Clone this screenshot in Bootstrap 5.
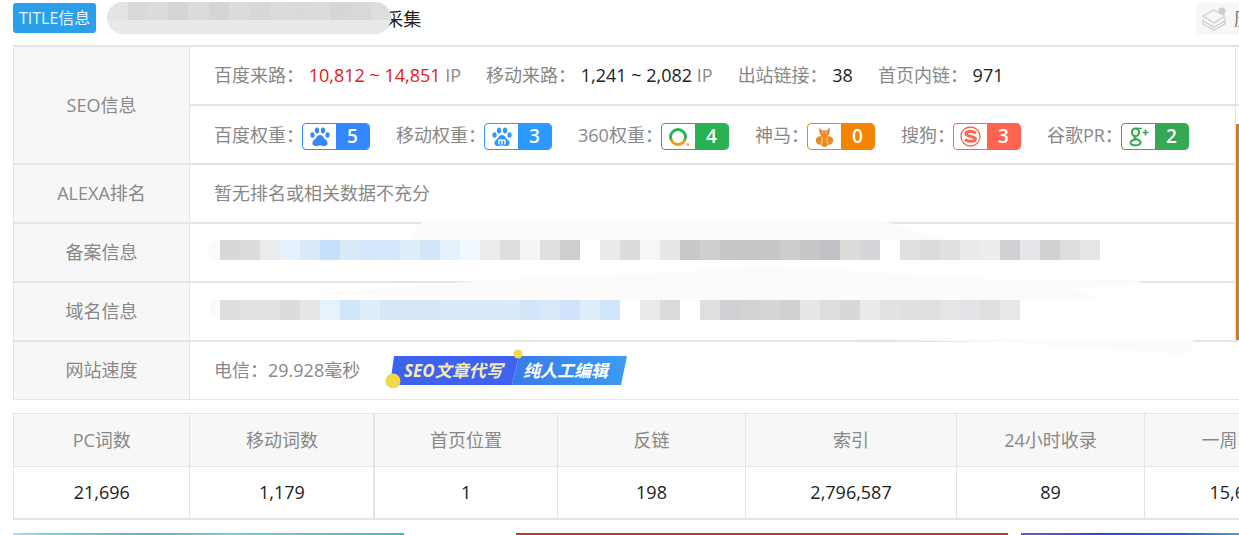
<!DOCTYPE html>
<html lang="zh-CN">
<head>
<meta charset="utf-8">
<meta name="viewport" content="width=device-width, initial-scale=1">
<title>SEO信息</title>
<link rel="stylesheet" href="https://cdn.jsdelivr.net/npm/bootstrap@5.3.0/dist/css/bootstrap.min.css">
<style>
body{font-family:"Open Sans","Noto Sans CJK SC",sans-serif;font-size:18px;line-height:27px;color:#888;height:100vh;overflow:hidden;background:#fff}
.page{padding-left:13px}
.topbar{height:45px;padding-top:2px}
.title-tag{background:#2b9fe9;font-size:16px;line-height:30px;padding:0 6px;border-radius:3px;color:#e4f4ff;margin-top:1px}
.smear{width:284px;height:32px;margin:0 -6px 0 11px;border-radius:16px;background:#e8e8e8;overflow:hidden}
.smear i{height:18px;flex:1}
.site-title{color:#222;line-height:34px}
.history{background:#f7f7f7;color:#777;width:43px;height:32px;padding:0 0 0 6px;margin-top:1px;overflow:hidden;white-space:nowrap}
.info{width:100%;border-collapse:collapse}
.info th,.info td{height:59px;border-top:2px solid #e4e4e4;padding:0 0 0 24px}
.info th{width:176px;padding:0;text-align:center;font-weight:400;background:#f7f7f7;border-left:1px solid #e4e4e4;border-right:1px solid #e4e4e4}
.info tr:last-child>*{height:58px;border-bottom:1px solid #e4e4e4}
.num{color:#222}
.hot{color:#e02020}
.traffic{column-gap:25px}
.weights{column-gap:26px;padding-top:2px}
.rank{width:68px;height:27px;border:1px solid var(--c);border-radius:4px;overflow:hidden;background:#fff;text-decoration:none;margin:1px 0 0 -2px}
.rank svg{width:33px;height:25px;flex:none}
.rank b{flex:1;background:var(--c);color:#fff;font-weight:600;font-size:19px;line-height:25px;text-align:center}
.edge{right:0;top:0;width:4px;height:295px;border-left:1px solid #e4e4e4}
.edge span{display:block;margin-top:79px;height:216px;background:#da7d0b}
.veil{left:0;top:-9px;width:1010px;height:145px;pointer-events:none}
.promo{margin-bottom:5px}
.promo svg{display:block}
.promo text{font-size:17px;font-weight:700;font-style:italic}
.counts-wrap{margin-top:13px;overflow:hidden}
.counts{width:107.5%;table-layout:fixed;border-collapse:collapse;text-align:center}
.counts th,.counts td{height:53px;border:1px solid #e4e4e4;padding:1px 0 0}
.counts th{background:#f7f7f7;font-weight:400}
.counts td{color:#222;border-bottom-width:2px}
.counts tr>:nth-child(3){border-left-width:2px}
.ads{margin-top:13px;height:2px}
.ads a{height:2px}
.ad-a{width:391px;background:linear-gradient(90deg,#b8dcf2,#7cd3d8 8%,#45bcc8 35%,#77d0d2 55%,#35bdc7)}
.ad-b{width:492px;margin-left:112px;background:#cc2d37}
.ad-c{flex:1;margin-left:13px;background:linear-gradient(90deg,#7650e4,#3446e2 35%,#3159ea 75%,#35a4ef)}
</style>
</head>
<body>
<main class="page">
  <header class="topbar d-flex align-items-start">
    <span class="title-tag">TITLE信息</span>
    <span class="smear d-flex position-relative z-1" aria-hidden="true"></span>
    <span class="site-title">采集</span>
    <button type="button" class="history border-0 ms-auto d-flex align-items-center gap-2">
      <svg class="flex-shrink-0" width="24" height="24" viewBox="0 0 24 24" fill="none" stroke="#ccc" stroke-width="1.3" stroke-linejoin="round"><path d="M1 9 12 3l11 6-11 7zM1 12v2l11 6 11-6v-3M1 15v2l11 6 11-6v-3"/><circle cx="20" cy="4" r="3.5" fill="#ccc" stroke="none"/></svg>
      <span>历史</span>
    </button>
  </header>

  <section class="position-relative">
    <table class="info">
      <tr>
        <th scope="row" rowspan="2">SEO信息</th>
        <td><div class="traffic d-flex text-nowrap">
          <span>百度来路： <span class="hot">10,812 ~ 14,851</span> IP</span>
          <span>移动来路： <span class="num">1,241 ~ 2,082</span> IP</span>
          <span>出站链接： <span class="num">38</span></span>
          <span>首页内链： <span class="num">971</span></span>
        </div></td>
      </tr>
      <tr>
        <td><div class="weights d-flex text-nowrap">
          <span class="d-flex">百度权重：<a href="#" class="rank d-flex" style="--c:#3388ff"><svg viewBox="0 0 33 25"><g fill="#3388ff"><ellipse cx="9.500" cy="11" rx="2.100" ry="2.800"/><ellipse cx="14" cy="6.500" rx="2.100" ry="3"/><ellipse cx="20" cy="6.500" rx="2.100" ry="3"/><ellipse cx="24.500" cy="11" rx="2.100" ry="2.800"/><path d="M17 11c3 0 3.500 3 6 5s2 6-1.500 6c-2 0-3-.6-4.500-.6s-2.500.6-4.500.6c-3.500 0-4-4-1.500-6s3-5 6-5z"/></g></svg><b>5</b></a></span>
          <span class="d-flex">移动权重：<a href="#" class="rank d-flex" style="--c:#2b99ff"><svg viewBox="0 0 33 25"><g fill="#2b99ff"><ellipse cx="9.500" cy="11" rx="2.100" ry="2.800"/><ellipse cx="14" cy="6.500" rx="2.100" ry="3"/><ellipse cx="20" cy="6.500" rx="2.100" ry="3"/><ellipse cx="24.500" cy="11" rx="2.100" ry="2.800"/><path d="M17 11c3 0 3.500 3 6 5s2 6-1.500 6c-2 0-3-.6-4.500-.6s-2.500.6-4.500.6c-3.500 0-4-4-1.500-6s3-5 6-5z"/></g><path d="M14 20.500v-5m0 1.500c1-2 3-1 3 0v3.500M17 17c1-2 3-1 3 0v3.500" fill="none" stroke="#fff" stroke-width="1.400"/></svg><b>3</b></a></span>
          <span class="d-flex">360权重：<a href="#" class="rank d-flex" style="--c:#27b152"><svg viewBox="0 0 33 25"><defs><linearGradient id="ring" x2="0" y2="1"><stop offset=".55" stop-color="#27b152"/><stop offset=".8" stop-color="#f59a23"/></linearGradient></defs><circle cx="16" cy="13" r="7.500" fill="none" stroke="url(#ring)" stroke-width="3"/><circle cx="26" cy="20.500" r="1.300" fill="#f59a23"/></svg><b>4</b></a></span>
          <span class="d-flex">神马：<a href="#" class="rank d-flex" style="--c:#f58500"><svg viewBox="0 0 33 25"><g fill="#ef8a22"><path d="M11 3.500l2 2 1.500 1h4l1.500-1 2-2-.5 6-2 2.500h-6l-2-2.500z"/><ellipse cx="16.500" cy="16.500" rx="5" ry="6.500"/><circle cx="12" cy="16.500" r="4.200"/><circle cx="21" cy="16.500" r="4.200"/></g><path d="M13 12.500c2 2 1.500 6-.5 8M20 12.500c-2 2-1.500 6 .5 8M14 8.500h1.500M17.500 8.500h1.500" stroke="#fff" stroke-width=".6" fill="none"/></svg><b>0</b></a></span>
          <span class="d-flex">搜狗：<a href="#" class="rank d-flex" style="--c:#ff6450"><svg viewBox="0 0 33 25" fill="none" stroke="#fb6450"><circle cx="16.500" cy="12.500" r="9.500" stroke-width="1.300"/><path d="M22 9c-3-2-10-2-10 .8 0 3 9.500 2.300 9.500 5.200 0 3-7.500 3-10.500.6" stroke-width="3"/></svg><b>3</b></a></span>
          <span class="d-flex">谷歌PR：<a href="#" class="rank d-flex" style="--c:#34a853"><svg viewBox="0 0 33 25" fill="none" stroke="#34a853"><ellipse cx="13.500" cy="8.300" rx="3.600" ry="3.900" stroke-width="2"/><path d="M13 4.300h7" stroke-width="1.300"/><path d="M14 12c-3 1.300-1.500 2.300.5 3 2.500 1 4 1.800 4 3.300 0 4-10 4-10 .5 0-2.500 3.500-3.200 6-3.300" stroke-width="2"/><path d="M23.500 5.500v6M20.500 8.500h6" stroke-width="1.700"/></svg><b>2</b></a></span>
        </div></td>
      </tr>
      <tr><th scope="row">ALEXA排名</th><td>暂无排名或相关数据不充分</td></tr>
      <tr>
        <th scope="row">备案信息</th>
        <td class="position-relative">
          <svg class="veil position-absolute" viewBox="190 215 1010 145" aria-hidden="true">
            <path fill="#fbfbfb" d="M412 240q2-20 22-20h425q30 0 50 9l40 11zM208 251q0-12 12-12v24q-12-2-12-12zM210 309q0-10 10-11v23q-10-2-10-12zM310 294l180-14 190-8 80-7 240 15h140v5l-68 3 25 10-67 2-340 1zM830 339h363v10q-8 6-22 4l-171-11z"/>
            <g id="mosaic"></g>
          </svg>
        </td>
      </tr>
      <tr><th scope="row">域名信息</th><td></td></tr>
      <tr>
        <th scope="row">网站速度</th>
        <td><div class="d-flex align-items-center"><span>电信：29.928毫秒</span>
          <a href="#" class="promo ms-4"><svg width="244" height="40" viewBox="384 347 244 40"><defs><linearGradient id="blue"><stop stop-color="#3c63ee"/><stop offset="1" stop-color="#4162ef"/></linearGradient><linearGradient id="sky"><stop stop-color="#397be9"/><stop offset="1" stop-color="#3c9cf3"/></linearGradient></defs><path fill="url(#blue)" d="M394 355h125l-7 29H390z"/><path fill="url(#sky)" d="M519 355h108l-6 29H512z"/><circle cx="393" cy="380" r="7.500" fill="#f4d84c"/><circle cx="518" cy="353" r="4.500" fill="#f4d84c"/><text x="404" y="376" fill="#f5edae">SEO文章代写</text><text x="523" y="376" fill="#fff">纯人工编辑</text></svg></a></div></td>
      </tr>
    </table>
    <div class="edge position-absolute"><span></span></div>
  </section>

  <section class="counts-wrap">
    <table class="counts">
      <colgroup><col style="width:13.4%"><col style="width:14%"><col style="width:13.9%"><col style="width:14.3%"><col style="width:16%"><col style="width:14.3%"><col style="width:14.1%"></colgroup>
      <tr><th>PC词数</th><th>移动词数</th><th>首页位置</th><th>反链</th><th>索引</th><th>24小时收录</th><th>一周收录</th></tr>
      <tr><td>21,696</td><td>1,179</td><td>1</td><td>198</td><td>2,796,587</td><td>89</td><td>15,600</td></tr>
    </table>
  </section>

  <nav class="ads d-flex" aria-label="推广">
    <a href="#" class="ad-a"></a><a href="#" class="ad-b"></a><a href="#" class="ad-c"></a>
  </nav>
</main>
<script src="https://cdn.jsdelivr.net/npm/bootstrap@5.3.0/dist/js/bootstrap.bundle.min.js"></script>
<script>
// Colours of the masking blocks, one per 20px cell; "-" leaves a cell clear.
const masks = {
  240: 'd7d8d9 dcdcdc ececec e5f1fc d8e9f9 c5e0f8 d8eaf8 d3e8fb d3e8fb dfeefb d1e7f9 e5f2fd f1f8ff ececed dedcdd f4f4f4 e0e0e0 cecece - ebebeb dcdcdc f6f6f6 e6e7e6 c9c7c8 cfcfcf c5c8c7 c6c6c5 c6c8c7 cbcccb c9c6c8 c1c0c6 dddcdb d6d5da - e0e0e0 d9dcdb dfe0e0 eaeaea ededed d0d0d2 e4e5e8 d0d0d0 dddddd e5e5e5',
  300: 'dedede e2e2e1 e2e2e3 dcdcdc e6e6e6 e6f2fc cfe5fa dfeefb d6e8f8 d6e8f8 d6e8f8 d9eafb d9eafb d9eafb d9eafb d1e6f9 d6e8f9 cfe4fa deeefa d1e6fa - ebe9ea dbdbdb - dfdfdf cfd0d3 d2d2d2 d6d6d6 d0d1d3 e7e7e7 dddddd d7d8da ebebed e2e2e2 e0e0e0 dfdfdf e5e5e4 e3e4e7 dfdfdf e8e8e8'
};
let cells = '';
for (const [y, row] of Object.entries(masks))
  row.split(' ').forEach((c, i) => { if (c !== '-') cells += `<rect x="${220 + i * 20}" y="${y}" width="20" height="20" fill="#${c}"/>`; });
document.getElementById('mosaic').innerHTML = cells;
document.querySelector('.smear').innerHTML =
  'e3e3e3 d9d9d9 dcdcdc d6d5d5 dcdcdc d6d5d5 dcdcdc d8d8d8 dcdcdc dadada dcdcdc d7d5d5 dad9d9 dedede'.split(' ').map(c => `<i style="background:#${c}"></i>`).join('');
</script>
</body>
</html>
